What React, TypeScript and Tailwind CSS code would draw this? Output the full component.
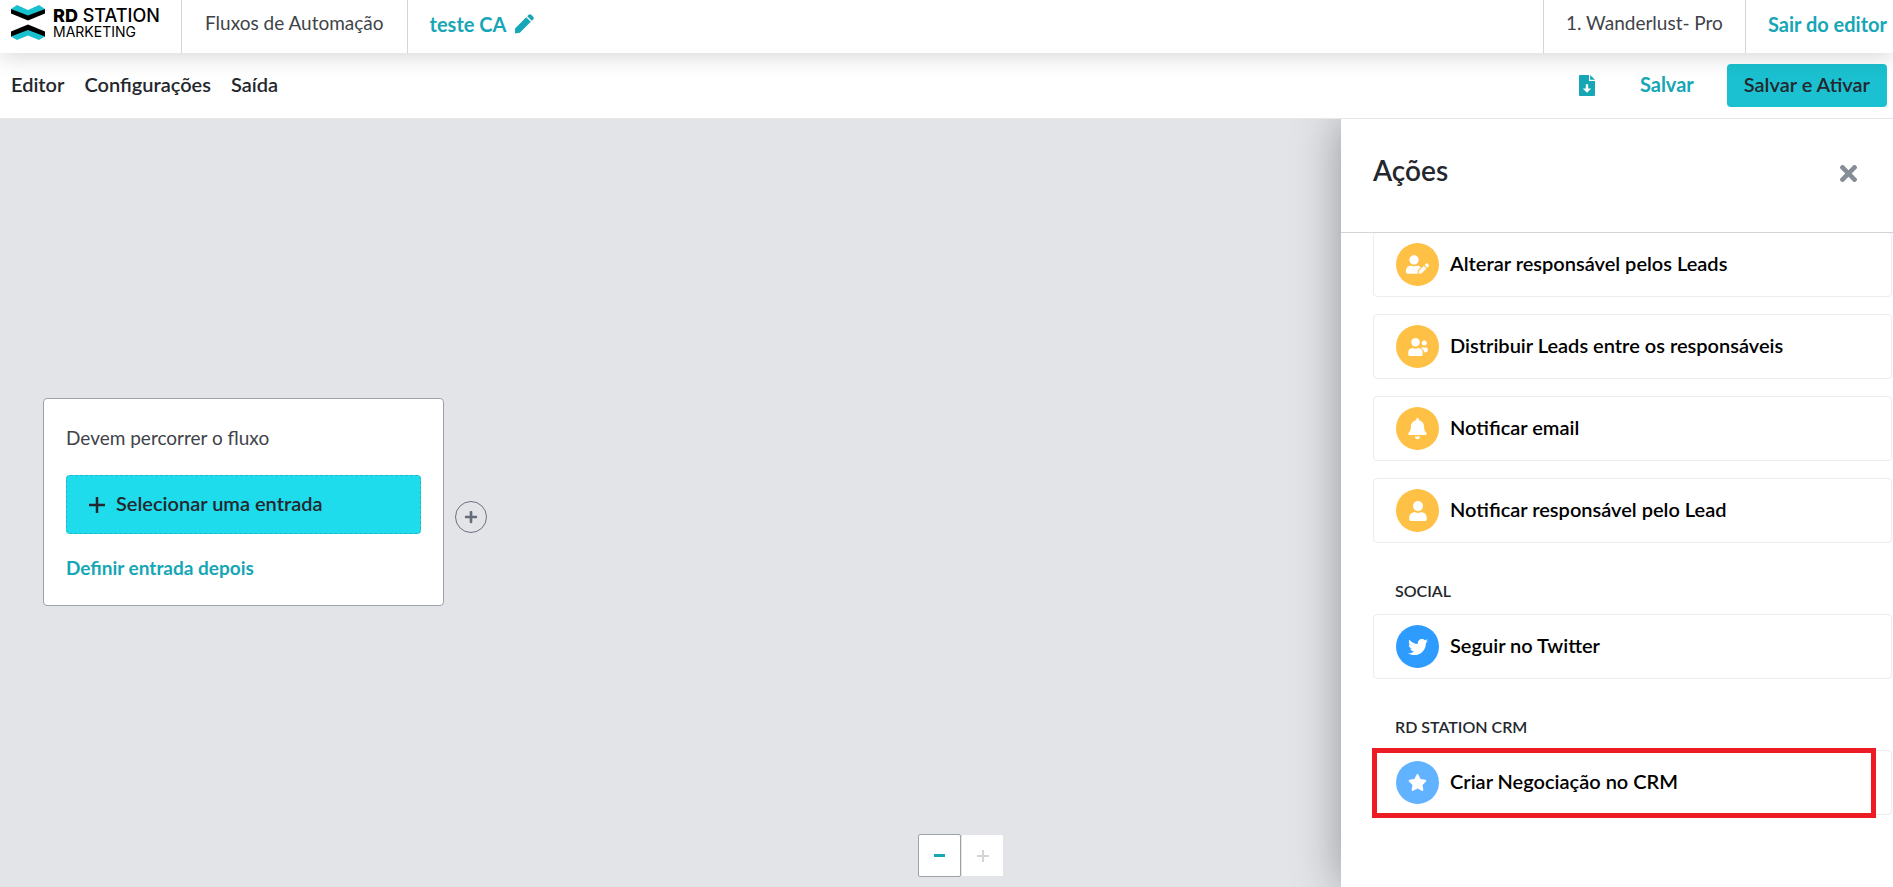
import type { ReactNode } from "react";
import { FaBell, FaPlus, FaStar, FaTimes, FaTwitter, FaUser, FaUserEdit } from "react-icons/fa";

type Action = {
  label: string;
  icon: ReactNode;
  color: string;
  highlighted?: boolean;
};

const leadActions: Action[] = [
  { label: "Alterar responsável pelos Leads", icon: <FaUserEdit size={23} />, color: "bg-[#ffc145]" },
  { label: "Distribuir Leads entre os responsáveis", icon: <UsersIcon />, color: "bg-[#ffc145]" },
  { label: "Notificar email", icon: <FaBell size={21} />, color: "bg-[#ffc145]" },
  { label: "Notificar responsável pelo Lead", icon: <FaUser size={20} />, color: "bg-[#ffc145]" },
];

const socialActions: Action[] = [
  { label: "Seguir no Twitter", icon: <FaTwitter size={20} />, color: "bg-[#2e9bff]" },
];

const crmActions: Action[] = [
  { label: "Criar Negociação no CRM", icon: <FaStar size={19} />, color: "bg-[#62b3ff]", highlighted: true },
];

function UsersIcon() {
  return (
    <svg width="20" height="18" viewBox="0 0 20 18" fill="currentColor" aria-hidden="true">
      <circle cx="7.5" cy="4.3" r="4.2" />
      <path d="M4.600 10c2 .9 3.800.9 5.800 0 2.500.1 4.300 2 4.300 4.500v1.900A1.500 1.500 0 0 1 13.200 18H1.700A1.500 1.500 0 0 1 .2 16.400v-1.900c0-2.500 1.900-4.400 4.400-4.500z" />
      <circle cx="16.300" cy="5" r="2.500" />
      <path d="M14.400 9.300c1.300.6 2.500.6 3.800 0 1 .2 1.700 1.200 1.700 2.500 0 1.500-.6 2.500-1.700 2.500h-2.100c-.2-1.800-1.100-3.200-2.800-4.100.3-.5.600-.8 1.100-.9z" />
    </svg>
  );
}

function PencilIcon() {
  return (
    <svg width="20" height="20" viewBox="0 0 20 20" fill="currentColor" aria-hidden="true">
      <path d="M12.200 3.200l4.600 4.600L5.800 18.800 1 19.500 1 14.600z" />
      <path d="M13.200 2.200l1.400-1.400c.8-.8 1.800-.8 2.600 0l2 2c.8.8.8 1.800 0 2.600l-1.400 1.400z" />
    </svg>
  );
}

function FileDownloadIcon() {
  return (
    <svg width="16" height="21" viewBox="0 0 16 21" fill="currentColor" aria-hidden="true">
      <path d="M1 0h9v6h6v14a1 1 0 0 1-1 1H1a1 1 0 0 1-1-1V1a1 1 0 0 1 1-1z" />
      <path d="M11.200 0L16 4.800h-4.800z" />
      <path d="M6.800 9.200h2.400v4.200h3L8 17.800l-4.200-4.400h3z" fill="#fff" />
    </svg>
  );
}

function Logo() {
  return (
    <a href="#inicio" aria-label="RD Station Marketing" className="flex items-center gap-2">
      <svg width="34" height="36" viewBox="0 0 34 36" aria-hidden="true">
        <path d="M0 4 L6 0 L17 5 L28 0 L34 4 L17 12 Z" fill="#19c1ce" />
        <path d="M0 4 L17 10.500 L34 4 V8.500 L17 15.500 L0 8.500 Z" fill="#000" />
        <path d="M0 26.500 L17 19.500 L34 26.500 V32 L17 26 L0 32 Z" fill="#000" />
        <path d="M0 31.500 L17 25 L34 31.500 L28 35 L17 30.500 L6 35 Z" fill="#19c1ce" />
      </svg>
      <span className="flex flex-col font-[Inter] text-black">
        <span className="text-[18px] leading-[18px] font-medium">
          <b className="font-extrabold">RD</b> STATION
        </span>
        <span className="text-[14px] leading-[14px]">MARKETING</span>
      </span>
    </a>
  );
}

function ActionList({ actions }: { actions: Action[] }) {
  return (
    <ul className="flex flex-col gap-[17px]">
      {actions.map((action) => (
        <li key={action.label} className="relative">
          <button className="flex h-[65px] w-full items-center gap-[11px] rounded-sm border border-[#ececed] bg-white pl-[22px] text-left text-[20px] font-semibold text-black">
            <span className={`flex size-[43px] items-center justify-center rounded-full text-white ${action.color}`}>
              {action.icon}
            </span>
            <span className="pb-1">{action.label}</span>
          </button>
          {action.highlighted && (
            <span className="pointer-events-none absolute -top-0.5 right-4 -bottom-[3px] -left-px border-5 border-[#ed1c24]" />
          )}
        </li>
      ))}
    </ul>
  );
}

export default function App() {
  return (
    <div className="flex h-screen flex-col overflow-hidden bg-[#e3e4e8] font-[Lato,sans-serif] text-[#24272d]">
      {/* Top bar */}
      <header className="z-20 flex h-[53px] shrink-0 items-stretch bg-white text-[20px] shadow-[0_2px_24px_rgba(0,0,0,0.18)]">
        <div className="flex w-[182px] items-center border-r border-[#d4d5d8] pb-2 pl-[11px]">
          <Logo />
        </div>
        <div className="flex items-center border-r border-[#d4d5d8] px-[23px] pb-1.5 text-[19px] text-[#404349]">
          Fluxos de Automação
        </div>
        <button className="flex items-center gap-2 px-[22px] pb-1.5 font-bold text-[#16a6b6]">
          teste CA
          <PencilIcon />
        </button>
        <div className="ml-auto flex items-center border-x border-[#d4d5d8] px-[22px] pb-1.5 text-[19px] text-[#404349]">
          1. Wanderlust- Pro
        </div>
        <a href="#sair" className="flex items-center pr-[6px] pb-1.5 pl-[22px] font-bold text-[#16a6b6]">
          Sair do editor
        </a>
      </header>

      {/* Editor menu */}
      <div className="z-10 flex h-[66px] shrink-0 items-center justify-between border-b border-[#e6e7e9] bg-white pr-[6px] pl-[11px] text-[20px] font-semibold">
        <nav className="flex gap-5 pb-1">
          <a href="#editor">Editor</a>
          <a href="#configuracoes">Configurações</a>
          <a href="#saida">Saída</a>
        </nav>
        <div className="flex items-center gap-[33px] text-[#16a6b6]">
          <button aria-label="Baixar" className="mr-3">
            <FileDownloadIcon />
          </button>
          <button className="pb-1 font-bold">Salvar</button>
          <button className="h-[43px] rounded-sm bg-[#1bc1d0] px-[17px] pb-1 text-[#24272d]">Salvar e Ativar</button>
        </div>
      </div>

      <div className="flex min-h-0 flex-1">
        {/* Canvas */}
        <main className="relative flex-1">
          <div className="absolute top-[279px] left-[43px] flex items-center gap-[11px]">
            <section className="flex h-[208px] w-[401px] flex-col items-start rounded-sm border border-[#9ca1aa] bg-white px-[22px] pt-[26px] text-[20px] leading-[26px]">
              <p className="text-[19px] text-[#404349]">Devem percorrer o fluxo</p>
              <button className="mt-6 flex h-[59px] w-full items-center gap-[11px] rounded-sm border border-dashed border-[#1bb9c8] bg-[#1edcec] pl-[22px] font-semibold">
                <svg width="16" height="16" viewBox="0 0 16 16" stroke="currentColor" strokeWidth="2.500" aria-hidden="true">
                  <path d="M8 0v16M0 8h16" />
                </svg>
                <span className="pb-1">Selecionar uma entrada</span>
              </button>
              <button className="mt-[21px] text-[19px] font-bold text-[#16a6b6]">Definir entrada depois</button>
            </section>
            <button
              aria-label="Adicionar etapa"
              className="mt-[30px] flex size-8 items-center justify-center rounded-full border border-[#6b7280] text-[#646c7a]"
            >
              <FaPlus size={14} />
            </button>
          </div>

          <div className="absolute bottom-[10px] left-[918px] flex">
            <button aria-label="Diminuir zoom" className="flex size-[43px] items-center justify-center rounded-xs border border-[#9ca1aa] bg-white">
              <span className="h-[3px] w-[11px] bg-[#16a6b6]" />
            </button>
            <button
              aria-label="Aumentar zoom"
              className="flex size-[43px] items-center justify-center rounded-xs border border-[#e3e4e8] bg-white text-[#d3d5d9]"
            >
              <svg width="12" height="12" viewBox="0 0 12 12" stroke="currentColor" strokeWidth="2" aria-hidden="true">
                <path d="M6 0v12M0 6h12" />
              </svg>
            </button>
          </div>
        </main>

        {/* Actions panel */}
        <aside className="flex w-[552px] shrink-0 flex-col bg-white shadow-[0_0_44px_rgba(0,0,0,0.35)]">
          <div className="flex h-[114px] shrink-0 items-center justify-between border-b border-[#d4d5d8] pr-8 pl-8">
            <h2 className="pb-3 text-[28px] font-semibold">Ações</h2>
            <button aria-label="Fechar" className="pb-1 text-[#868d97]">
              <FaTimes size={25} />
            </button>
          </div>
          <div className="min-h-0 flex-1 overflow-y-auto">
            <div className="-mt-px pr-px pl-8">
              <ActionList actions={leadActions} />
              <h3 className="mt-[37px] mb-[13px] pl-[22px] text-[16px] leading-[21px] font-semibold">SOCIAL</h3>
              <ActionList actions={socialActions} />
              <h3 className="mt-[37px] mb-[13px] pl-[22px] text-[16px] leading-[21px] font-semibold">RD STATION CRM</h3>
              <ActionList actions={crmActions} />
            </div>
          </div>
        </aside>
      </div>
    </div>
  );
}
